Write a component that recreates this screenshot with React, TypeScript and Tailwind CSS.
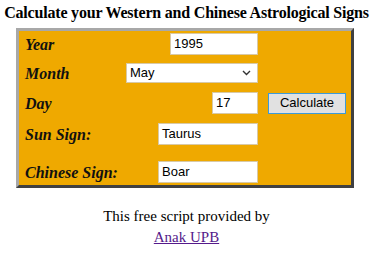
const serif = "font-['Liberation_Serif','Times_New_Roman',serif]";
const sans = "font-['Liberation_Sans',Arial,sans-serif]";

function Field({ value, width }: { value: string; width: string }) {
  return (
    <div
      className={`${width} h-[22px] bg-white border border-[#d8c9a6] flex items-center px-[3px] text-[13px] text-black ${sans}`}
    >
      {value}
    </div>
  );
}

function Label({ text }: { text: string }) {
  return (
    <span className={`${serif} font-bold italic text-[16px] text-[#111]`}>
      {text}
    </span>
  );
}

export default function App() {
  return (
    <div className="w-[373px] h-[256px] bg-white overflow-hidden">
      <h1
        className={`${serif} font-bold text-[16px] leading-[18px] text-center pt-[4px] text-black whitespace-nowrap tracking-[-0.2px]`}
      >
        Calculate your Western and Chinese Astrological Signs
      </h1>
      <div className="ml-[16px] mt-[6px] w-[338px] border-[3px] border-t-[#a8a8a8] border-l-[#a8a8a8] border-r-[#404040] border-b-[#404040] bg-[#efa900] pl-[6px] pt-[2px] pb-[2px]">
        <div className="flex items-center h-[22px]">
          <div className="w-[145px]">
            <Label text="Year" />
          </div>
          <Field value="1995" width="w-[88px]" />
        </div>
        <div className="flex items-center h-[22px] mt-[7px]">
          <div className="w-[101px]">
            <Label text="Month" />
          </div>
          <div
            className={`w-[132px] h-[20px] bg-white border border-[#d8c9a6] flex items-center justify-between pl-[3px] pr-[6px] text-[13px] text-black ${sans}`}
          >
            <span>May</span>
            <svg width="9" height="6" viewBox="0 0 9 6">
              <path d="M1 1l3.5 3.5L8 1" fill="none" stroke="#333" strokeWidth="1.4" />
            </svg>
          </div>
        </div>
        <div className="flex items-center h-[22px] mt-[8px]">
          <div className="w-[187px]">
            <Label text="Day" />
          </div>
          <Field value="17" width="w-[46px]" />
          <div
            className={`ml-[10px] w-[78px] h-[21px] bg-[#e1e1e1] border border-[#3c9ad8] flex items-center justify-center text-[13px] text-black ${sans}`}
          >
            Calculate
          </div>
        </div>
        <div className="flex items-center h-[22px] mt-[9px]">
          <div className="w-[133px]">
            <Label text="Sun Sign:" />
          </div>
          <Field value="Taurus" width="w-[100px]" />
        </div>
        <div className="flex items-center h-[22px] mt-[16px]">
          <div className="w-[133px]">
            <Label text="Chinese Sign:" />
          </div>
          <Field value="Boar" width="w-[100px]" />
        </div>
      </div>
      <div className={`${serif} text-[15px] leading-[18px] text-center text-black mt-[19px]`}>
        <p>This free script provided by</p>
        <p className="mt-[3px]">
          <a href="#" className="text-[#551a8b] underline">
            Anak UPB
          </a>
        </p>
      </div>
    </div>
  );
}
